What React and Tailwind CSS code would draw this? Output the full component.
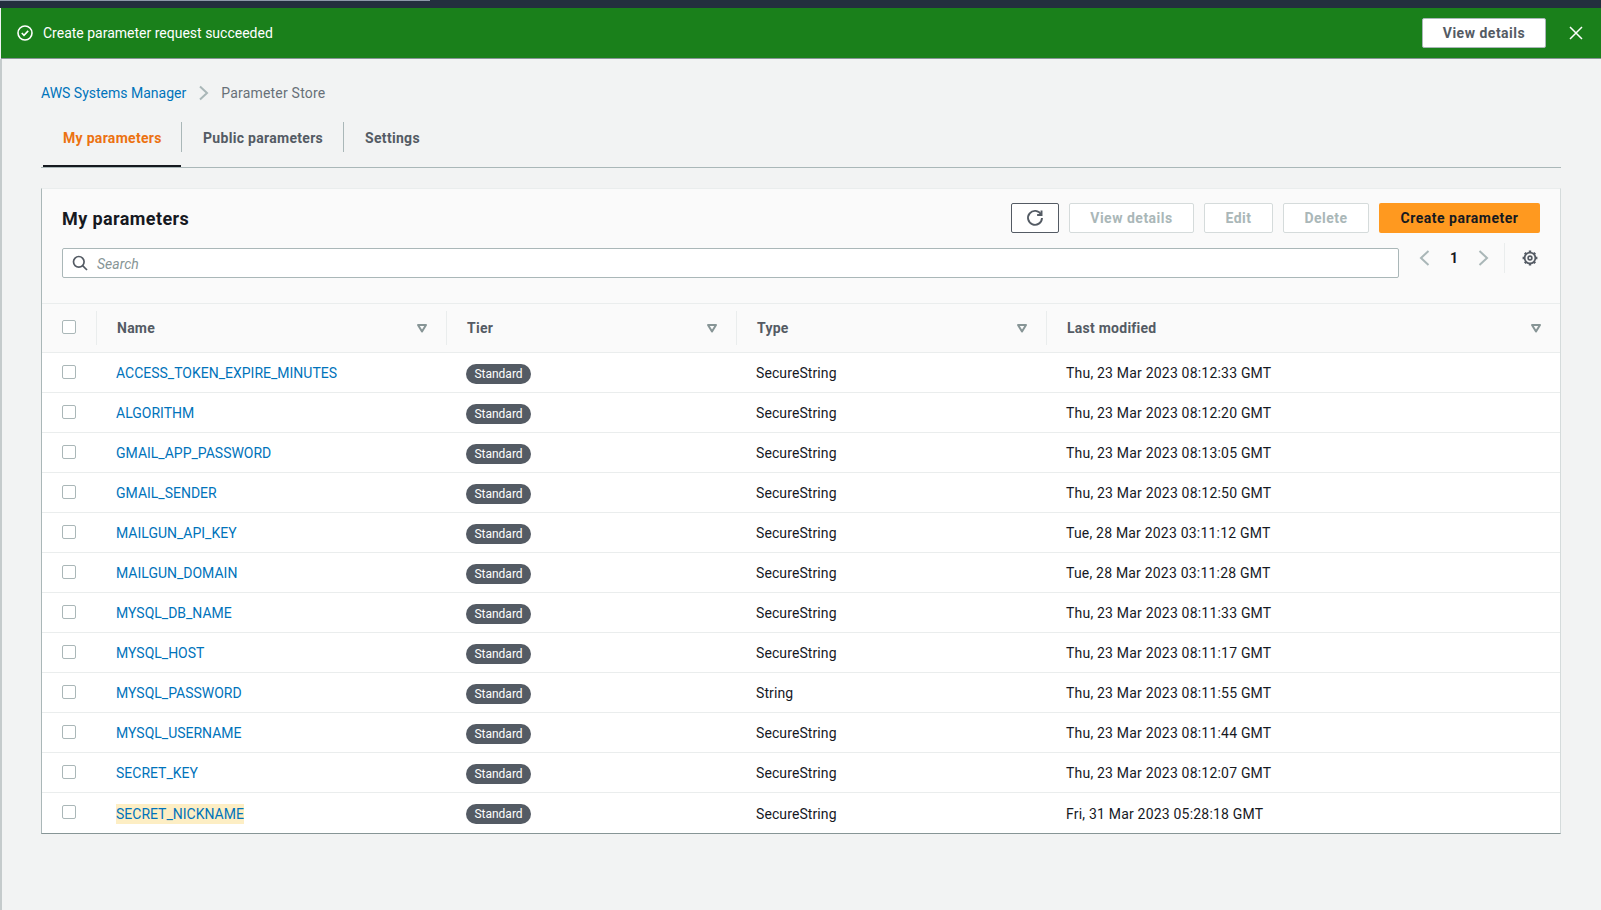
import React from 'react';

const rows = [
    ['ACCESS_TOKEN_EXPIRE_MINUTES', 'SecureString', 'Thu, 23 Mar 2023 08:12:33 GMT'],
    ['ALGORITHM', 'SecureString', 'Thu, 23 Mar 2023 08:12:20 GMT'],
    ['GMAIL_APP_PASSWORD', 'SecureString', 'Thu, 23 Mar 2023 08:13:05 GMT'],
    ['GMAIL_SENDER', 'SecureString', 'Thu, 23 Mar 2023 08:12:50 GMT'],
    ['MAILGUN_API_KEY', 'SecureString', 'Tue, 28 Mar 2023 03:11:12 GMT'],
    ['MAILGUN_DOMAIN', 'SecureString', 'Tue, 28 Mar 2023 03:11:28 GMT'],
    ['MYSQL_DB_NAME', 'SecureString', 'Thu, 23 Mar 2023 08:11:33 GMT'],
    ['MYSQL_HOST', 'SecureString', 'Thu, 23 Mar 2023 08:11:17 GMT'],
    ['MYSQL_PASSWORD', 'String', 'Thu, 23 Mar 2023 08:11:55 GMT'],
    ['MYSQL_USERNAME', 'SecureString', 'Thu, 23 Mar 2023 08:11:44 GMT'],
    ['SECRET_KEY', 'SecureString', 'Thu, 23 Mar 2023 08:12:07 GMT'],
    ['SECRET_NICKNAME', 'SecureString', 'Fri, 31 Mar 2023 05:28:18 GMT'],
];

const Caret = () => (
    <svg width="12" height="12" viewBox="0 0 12 12" fill="none" stroke="#879596" strokeWidth="2" strokeLinejoin="round">
        <path d="M2 3h8L6 9.5z" />
    </svg>
);

const Checkbox = () => <span className="block -mt-[2px] w-[14px] h-[14px] rounded-[2px] border border-[#aab7b8] bg-white" />;

const HeaderCell = ({ label }) => (
    <div className="flex items-center h-[34px] border-l border-[#eaeded] pl-5 pr-[18px]">
        <span className="flex-1 font-bold tracking-[0.25px] text-[#545b64]">{label}</span>
        <Caret />
    </div>
);

const Button = ({ children, className }) => (
    <button className={`h-[30px] rounded-[2px] border border-[#d5dbdb] bg-white font-bold tracking-[0.5px] text-[#aab7b8] ${className}`}>{children}</button>
);

const App = () => {
    return (
        <div className="h-[910px] w-[1601px] overflow-hidden bg-[#f2f3f3] text-[14px] text-[#16191f] font-['Roboto',sans-serif]">
            <div className="h-[8px] bg-[#232f3e]">
                <div className="h-px w-[430px] bg-[#8d99a8]" />
            </div>
            <div className="h-[51px] ml-px flex items-center bg-[#1a801b] pl-[16px] pr-[18px] text-white border-b border-[#879596]">
                <svg width="16" height="16" viewBox="0 0 16 16" fill="none" stroke="currentColor" strokeWidth="1.6">
                    <circle cx="8" cy="8" r="7" />
                    <path d="M4.8 8l2.2 2.3 4.2-4.4" />
                </svg>
                <span className="ml-[10px] flex-1">Create parameter request succeeded</span>
                <button className="h-[30px] w-[124px] rounded-[2px] border border-[#aab7b8] bg-white font-bold tracking-[0.5px] text-[#545b64]">View details</button>
                <svg className="ml-[23px]" width="14" height="14" viewBox="0 0 14 14" fill="none" stroke="currentColor" strokeWidth="1.5">
                    <path d="M1 1l12 12M13 1L1 13" />
                </svg>
            </div>

            <div className="h-[851px] border-l-[2px] border-[#c5cbcc] pl-[39px] pr-[40px] pt-[24px]">
                <div className="flex items-center h-[20px] text-[#0073bb]">
                    <span>AWS Systems Manager</span>
                    <svg className="ml-[12px] mr-[11px]" width="12" height="16" viewBox="0 0 12 16" fill="none" stroke="#aab7b8" strokeWidth="2">
                        <path d="M2 1.5L9 8l-7 6.5" />
                    </svg>
                    <span className="tracking-[0.2px] text-[#687078]">Parameter Store</span>
                </div>

                <div className="flex h-[46px] mt-[19px] items-start border-b border-[#aab7b8] font-bold tracking-[0.3px] text-[#545b64]">
                    <div className="relative w-[140px] h-[46px] pl-[22px] pt-[6px]">
                        <span className="text-[#ec7211]">My parameters</span>
                        <span className="absolute left-[2px] right-0 bottom-[1px] h-[2px] bg-[#16191f]" />
                    </div>
                    <div className="h-[30px] border-l border-[#aab7b8] pl-[21px] pr-[20px] pt-[6px]">Public parameters</div>
                    <div className="h-[30px] border-l border-[#aab7b8] pl-[21px] pt-[6px]">Settings</div>
                </div>

                <div className="mt-[20px] h-[646px] border border-[#eaeded] border-r-[#d5dbdb] border-l-[#aab7b8] border-b-[#879596] bg-white">
                    <div className="h-[115px] bg-[#fafafa] border-b border-[#eaeded] px-5 pt-[14px]">
                        <div className="flex items-center h-[30px]">
                            <h2 className="flex-1 text-[18px] font-bold tracking-[0.4px] text-[#16191f]">My parameters</h2>
                            <button className="h-[30px] w-[48px] flex items-center justify-center rounded-[2px] border border-[#545b64] bg-white text-[#545b64]">
                                <svg width="18" height="18" viewBox="0 0 16 16" fill="none" stroke="currentColor" strokeWidth="1.7">
                                    <path d="M13.4 4.8A6.2 6.2 0 1 0 14.2 8" />
                                    <path d="M13.8 1.4v3.9h-3.9" />
                                </svg>
                            </button>
                            <Button className="ml-[10px] w-[125px]">View details</Button>
                            <Button className="ml-[10px] w-[69px]">Edit</Button>
                            <Button className="ml-[10px] w-[86px]">Delete</Button>
                            <button className="ml-[10px] h-[30px] w-[161px] rounded-[2px] bg-[#ff991f] font-bold tracking-[0.5px] text-[#16191f]">Create parameter</button>
                        </div>
                        <div className="flex mt-[15px]">
                            <div className="w-[1337px] h-[30px] flex items-center rounded-[2px] border border-[#aab7b8] bg-white pl-[9px]">
                                <svg width="16" height="16" viewBox="0 0 16 16" fill="none" stroke="#545b64" strokeWidth="1.7">
                                    <circle cx="6.8" cy="6.8" r="5.3" />
                                    <path d="M10.6 10.6L15 15" />
                                </svg>
                                <span className="ml-[9px] pt-[2px] italic text-[#879596]">Search</span>
                            </div>
                            <div className="flex items-center h-[30px] -mt-[5px] ml-[20px]">
                                <svg width="12" height="16" viewBox="0 0 12 16" fill="none" stroke="#aab7b8" strokeWidth="2">
                                    <path d="M9.5 1L2 8l7.5 7" />
                                </svg>
                                <span className="w-[46px] text-center font-bold">1</span>
                                <svg width="12" height="16" viewBox="0 0 12 16" fill="none" stroke="#aab7b8" strokeWidth="2">
                                    <path d="M2.5 1L10 8l-7.5 7" />
                                </svg>
                                <div className="ml-[15px] h-[30px] border-l border-[#eaeded] pl-[17px]">
                                    <svg className="mt-[7px]" width="16" height="16" viewBox="0 0 16 16" fill="none" stroke="#545b64">
                                        <circle cx="8" cy="8" r="5.4" strokeWidth="1.8" />
                                        <circle cx="8" cy="8" r="1.9" strokeWidth="1.6" />
                                        <path strokeWidth="2.4" d="M8 .6v2M8 13.4v2M.6 8h2M13.4 8h2M2.8 2.8l1.4 1.4M11.8 11.8l1.4 1.4M13.2 2.8l-1.4 1.4M4.2 11.8l-1.4 1.4" />
                                    </svg>
                                </div>
                            </div>
                        </div>
                    </div>

                    <div className="grid grid-cols-[54px_350px_290px_310px_1fr] h-[49px] items-center bg-[#fafafa] border-b border-[#eaeded]">
                        <div className="pl-5"><Checkbox /></div>
                        <HeaderCell label="Name" />
                        <HeaderCell label="Tier" />
                        <HeaderCell label="Type" />
                        <HeaderCell label="Last modified" />
                    </div>

                    {rows.map((row, index) => (
                        <div key={row[0]} className={`grid grid-cols-[54px_350px_290px_310px_1fr] h-[40px] items-center ${index < rows.length - 1 ? 'border-b border-[#eaeded]' : ''}`}>
                            <div className="pl-5"><Checkbox /></div>
                            <div className="pl-5 pt-[2px]">
                                <span className={`text-[#0073bb] ${row[0] === 'SECRET_NICKNAME' ? 'bg-[#fdeec4] py-[2px]' : ''}`}>{row[0]}</span>
                            </div>
                            <div className="pl-5 pt-[2px]">
                                <span className="flex items-center justify-center w-[65px] h-[20px] rounded-full bg-[#545b64] text-[12px] text-white">Standard</span>
                            </div>
                            <div className="pl-5 pt-[2px] tracking-[0.1px]">{row[1]}</div>
                            <div className="pl-5 pt-[2px] tracking-[0.2px]">{row[2]}</div>
                        </div>
                    ))}
                </div>
            </div>
        </div>
    );
};

export default App;
